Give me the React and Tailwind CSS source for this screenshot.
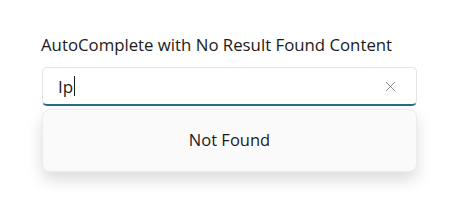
import { X } from 'lucide-react'

export default function App() {
  return (
    <div className="w-[457px] h-[214px] bg-white font-['Segoe_UI','Open_Sans',sans-serif] text-[#1a1a1a]">
      <div className="pt-[34px] pl-[41px] w-[417px]">
        <div className="text-[16.8px] leading-[22px]">AutoComplete with No Result Found Content</div>
        <div className="mt-[11px] ml-[1px] h-[39px] rounded-[5px] border border-[#e5e5e5] border-b-2 border-b-[#23707f] bg-white flex items-center pl-[15px] pr-[17px]">
          <span className="text-[17px] leading-none">Ip</span>
          <span className="w-px h-[20px] bg-[#1a1a1a] ml-px" />
          <div className="flex-1" />
          <X size={17} strokeWidth={1.1} className="text-[#6b6b6b]" />
        </div>
        <div className="mt-[3px] ml-[1px] h-[63px] rounded-[8px] bg-[#fafafa] border border-[#ececec] shadow-[0_8px_16px_rgba(0,0,0,0.14)] flex items-center justify-center">
          <span className="text-[16.5px]">Not Found</span>
        </div>
      </div>
    </div>
  )
}
